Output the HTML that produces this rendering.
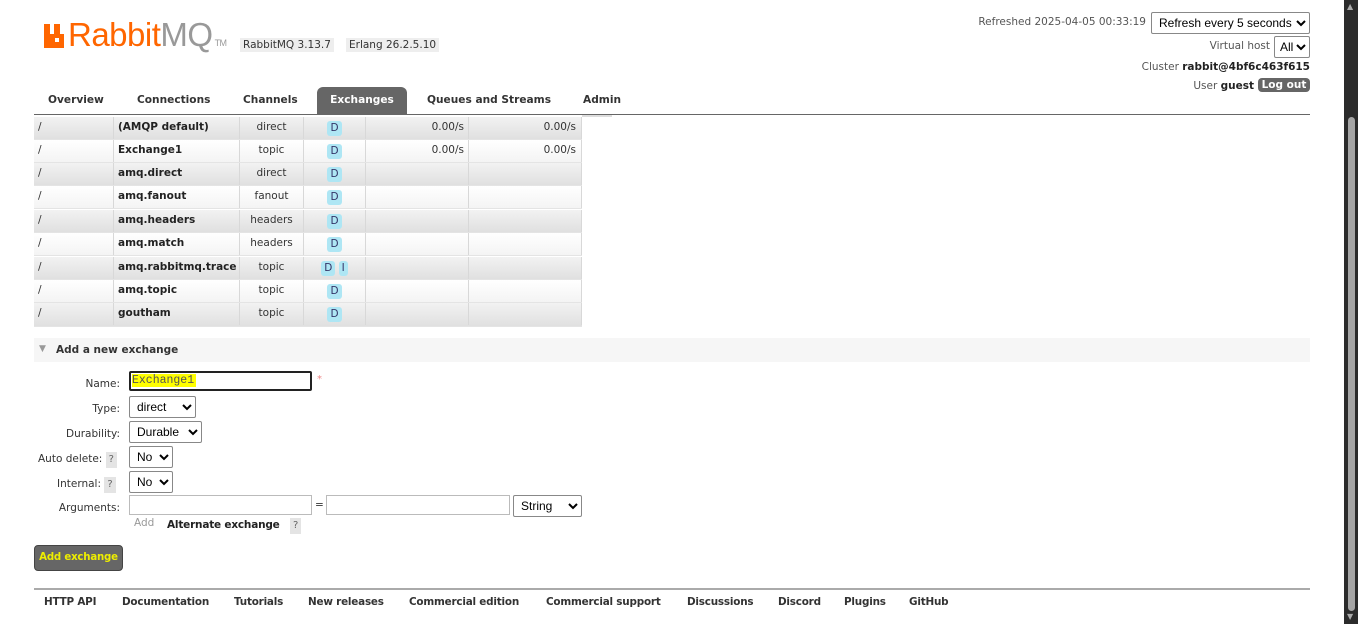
<!DOCTYPE html>
<html><head><meta charset="utf-8"><style>
*{margin:0;padding:0;box-sizing:border-box}
body{width:1358px;height:624px;overflow:hidden;background:#fff;font-family:"DejaVu Sans","Liberation Sans",sans-serif;font-size:10.5px;color:#333;position:relative}
.a{position:absolute;white-space:nowrap}
b{font-weight:bold;color:#222}
.tab{position:absolute;top:87px;height:27px;line-height:27px;font-weight:bold;font-size:10.6px;color:#333}
.row{position:absolute;left:34px;width:548px;height:23px;border-bottom:1px solid #e4e4e4}
.g{background:linear-gradient(#f2f2f2,#e0e0e0)}
.w{background:linear-gradient(#fff,#f4f4f4)}
.c{position:absolute;top:0;height:22px;line-height:21px;border-right:1px solid #d8d8d8}
.badge{display:inline-block;background:#aee6f4;border-radius:3px;padding:0 3px;height:15px;line-height:15px;font-size:10.5px;color:#336;margin-top:4px}
select{position:absolute;font-family:"Liberation Sans",sans-serif;font-size:12px;height:22px;border:1px solid #888;border-radius:2px;background:#fff;padding-left:3px;color:#000}
input{position:absolute;height:20px;border:1px solid #bbb;background:#fff}
.lbl{position:absolute;text-align:right;width:86px;left:34px}
.q{display:inline-block;background:#e4e4e4;color:#666;padding:0 3px;font-size:10px;line-height:16px}
.f{position:absolute;top:596px;font-weight:bold;font-size:10.4px;color:#333;letter-spacing:-0.2px}
.r{position:absolute;right:48px;white-space:nowrap;color:#555}
</style></head><body>
<svg class="a" style="left:44px;top:24px" width="22" height="24" viewBox="0 0 22 24"><path d="M0 0h6v10h4V0h6v10h4v14H0z" fill="#f60"/><rect x="11" y="14" width="4" height="4" fill="#fff"/></svg>
<div class="a" style="left:68px;top:16px;font-family:'Liberation Sans',sans-serif;font-size:33px;color:#f60;letter-spacing:-0.5px">Rabbit<span style="color:#999">MQ</span><span style="font-size:9px;color:#999;margin-left:2px">TM</span></div>
<div class="a" style="left:240px;top:38px;background:#eee;padding:1px 3px;font-size:10.5px">RabbitMQ 3.13.7</div>
<div class="a" style="left:346px;top:38px;background:#eee;padding:1px 3px;font-size:10.5px">Erlang 26.2.5.10</div>
<div class="r" style="right:212px;top:16px">Refreshed 2025-04-05 00:33:19</div>
<select style="left:1151px;top:12px;width:159px"><option>Refresh every 5 seconds</option></select>
<div class="r" style="right:88px;top:40px">Virtual host</div>
<select style="left:1274px;top:36px;width:36px;padding-left:1px"><option>All</option></select>
<div class="r" style="top:61px">Cluster <b>rabbit@4bf6c463f615</b></div>
<div class="r" style="right:104px;top:80px">User <b>guest</b></div>
<div class="a" style="left:1258px;top:78px;width:52px;background:#666;color:#fff;border-radius:4px;padding:1px 0;text-align:center;font-weight:bold">Log out</div>
<div class="tab" style="left:48px">Overview</div>
<div class="tab" style="left:137px">Connections</div>
<div class="tab" style="left:243px">Channels</div>
<div class="tab" style="left:317px;width:90px;background:#666;color:#fff;border-radius:6px 6px 0 0;text-align:center">Exchanges</div>
<div class="tab" style="left:427px">Queues and Streams</div>
<div class="tab" style="left:583px">Admin</div>
<div class="a" style="left:34px;top:114px;width:1276px;height:1px;background:#666"></div>
<div class="a" style="left:582px;top:115px;width:30px;height:2px;background:#ddd"></div>
<div class="row g" style="top:117px"><div class="c" style="left:0;width:80px;padding-left:4px">/</div><div class="c" style="left:80px;width:126px;padding-left:4px"><b>(AMQP default)</b></div><div class="c" style="left:206px;width:64px;text-align:center">direct</div><div class="c" style="left:270px;width:62px;text-align:center"><span class="badge">D</span></div><div class="c" style="left:332px;width:103px;text-align:right;padding-right:4px">0.00/s</div><div class="c" style="left:435px;width:113px;text-align:right;padding-right:5px">0.00/s</div></div>
<div class="row w" style="top:140px"><div class="c" style="left:0;width:80px;padding-left:4px">/</div><div class="c" style="left:80px;width:126px;padding-left:4px"><b>Exchange1</b></div><div class="c" style="left:206px;width:64px;text-align:center">topic</div><div class="c" style="left:270px;width:62px;text-align:center"><span class="badge">D</span></div><div class="c" style="left:332px;width:103px;text-align:right;padding-right:4px">0.00/s</div><div class="c" style="left:435px;width:113px;text-align:right;padding-right:5px">0.00/s</div></div>
<div class="row g" style="top:163px"><div class="c" style="left:0;width:80px;padding-left:4px">/</div><div class="c" style="left:80px;width:126px;padding-left:4px"><b>amq.direct</b></div><div class="c" style="left:206px;width:64px;text-align:center">direct</div><div class="c" style="left:270px;width:62px;text-align:center"><span class="badge">D</span></div><div class="c" style="left:332px;width:103px"></div><div class="c" style="left:435px;width:113px"></div></div>
<div class="row w" style="top:186px"><div class="c" style="left:0;width:80px;padding-left:4px">/</div><div class="c" style="left:80px;width:126px;padding-left:4px"><b>amq.fanout</b></div><div class="c" style="left:206px;width:64px;text-align:center">fanout</div><div class="c" style="left:270px;width:62px;text-align:center"><span class="badge">D</span></div><div class="c" style="left:332px;width:103px"></div><div class="c" style="left:435px;width:113px"></div></div>
<div class="row g" style="top:210px"><div class="c" style="left:0;width:80px;padding-left:4px">/</div><div class="c" style="left:80px;width:126px;padding-left:4px"><b>amq.headers</b></div><div class="c" style="left:206px;width:64px;text-align:center">headers</div><div class="c" style="left:270px;width:62px;text-align:center"><span class="badge">D</span></div><div class="c" style="left:332px;width:103px"></div><div class="c" style="left:435px;width:113px"></div></div>
<div class="row w" style="top:233px"><div class="c" style="left:0;width:80px;padding-left:4px">/</div><div class="c" style="left:80px;width:126px;padding-left:4px"><b>amq.match</b></div><div class="c" style="left:206px;width:64px;text-align:center">headers</div><div class="c" style="left:270px;width:62px;text-align:center"><span class="badge">D</span></div><div class="c" style="left:332px;width:103px"></div><div class="c" style="left:435px;width:113px"></div></div>
<div class="row g" style="top:257px"><div class="c" style="left:0;width:80px;padding-left:4px">/</div><div class="c" style="left:80px;width:126px;padding-left:4px"><b>amq.rabbitmq.trace</b></div><div class="c" style="left:206px;width:64px;text-align:center">topic</div><div class="c" style="left:270px;width:62px;text-align:center"><span class="badge">D</span> <span class="badge">I</span></div><div class="c" style="left:332px;width:103px"></div><div class="c" style="left:435px;width:113px"></div></div>
<div class="row w" style="top:280px"><div class="c" style="left:0;width:80px;padding-left:4px">/</div><div class="c" style="left:80px;width:126px;padding-left:4px"><b>amq.topic</b></div><div class="c" style="left:206px;width:64px;text-align:center">topic</div><div class="c" style="left:270px;width:62px;text-align:center"><span class="badge">D</span></div><div class="c" style="left:332px;width:103px"></div><div class="c" style="left:435px;width:113px"></div></div>
<div class="row g" style="top:303px;height:24px"><div class="c" style="left:0;width:80px;padding-left:4px">/</div><div class="c" style="left:80px;width:126px;padding-left:4px"><b>goutham</b></div><div class="c" style="left:206px;width:64px;text-align:center">topic</div><div class="c" style="left:270px;width:62px;text-align:center"><span class="badge">D</span></div><div class="c" style="left:332px;width:103px"></div><div class="c" style="left:435px;width:113px"></div></div>
<div class="a" style="left:34px;top:338px;width:1276px;height:24px;background:#f6f6f6"></div>
<div class="a" style="left:39px;top:344px;font-size:9px;color:#999">▼</div>
<div class="a" style="left:56px;top:344px;font-weight:bold">Add a new exchange</div>
<div class="lbl" style="top:378px">Name:</div>
<input style="left:129px;top:371px;width:183px;border:2px solid #222;border-radius:2px">
<div class="a" style="left:132px;top:374px;background:#ff0;font-family:'Liberation Mono',monospace;font-size:11.5px;color:#555;padding-right:2px">Exchange1</div>
<div class="a" style="left:317px;top:374px;color:#e88;font-size:10px">*</div>
<div class="lbl" style="top:403px">Type:</div>
<select style="left:129px;top:396px;width:67px"><option>direct</option></select>
<div class="lbl" style="top:428px">Durability:</div>
<select style="left:129px;top:421px;width:73px"><option>Durable</option></select>
<div class="a" style="left:38px;top:452px">Auto delete: <span class="q">?</span></div>
<select style="left:129px;top:446px;width:44px"><option>No</option></select>
<div class="a" style="left:57px;top:477px">Internal: <span class="q">?</span></div>
<select style="left:129px;top:471px;width:44px"><option>No</option></select>
<div class="lbl" style="top:502px">Arguments:</div>
<input style="left:129px;top:495px;width:183px">
<div class="a" style="left:315px;top:499px">=</div>
<input style="left:326px;top:495px;width:184px">
<select style="left:513px;top:495px;width:69px"><option>String</option></select>
<div class="a" style="left:134px;top:517px;color:#999">Add</div>
<div class="a" style="left:167px;top:519px;letter-spacing:-0.2px"><b>Alternate exchange</b></div>
<div class="a" style="left:290px;top:518px"><span class="q">?</span></div>
<div class="a" style="left:34px;top:545px;width:89px;height:26px;background:#666;border-radius:4px;border:1px solid #444;color:#ee0;font-weight:bold;font-size:10.2px;letter-spacing:-0.2px;line-height:24px;text-align:center">Add exchange</div>
<div class="a" style="left:34px;top:588px;width:1276px;height:2px;background:#aaa"></div>
<div class="f" style="left:44px">HTTP API</div>
<div class="f" style="left:122px">Documentation</div>
<div class="f" style="left:234px">Tutorials</div>
<div class="f" style="left:308px">New releases</div>
<div class="f" style="left:409px">Commercial edition</div>
<div class="f" style="left:546px">Commercial support</div>
<div class="f" style="left:687px">Discussions</div>
<div class="f" style="left:778px">Discord</div>
<div class="f" style="left:844px">Plugins</div>
<div class="f" style="left:909px">GitHub</div>
<div class="a" style="left:1344px;top:0;width:14px;height:624px;background-color:#2b2b2b;z-index:5"></div>
<div class="a" style="left:1348px;top:117px;width:7px;height:494px;background:#a5a5a5;border-radius:4px;z-index:6"></div>
<div class="a" style="left:1347px;top:2px;font-size:8px;color:#aaa;z-index:6">▲</div>
<div class="a" style="left:1347px;top:612px;font-size:8px;color:#aaa;z-index:6">▼</div>
</body></html>
